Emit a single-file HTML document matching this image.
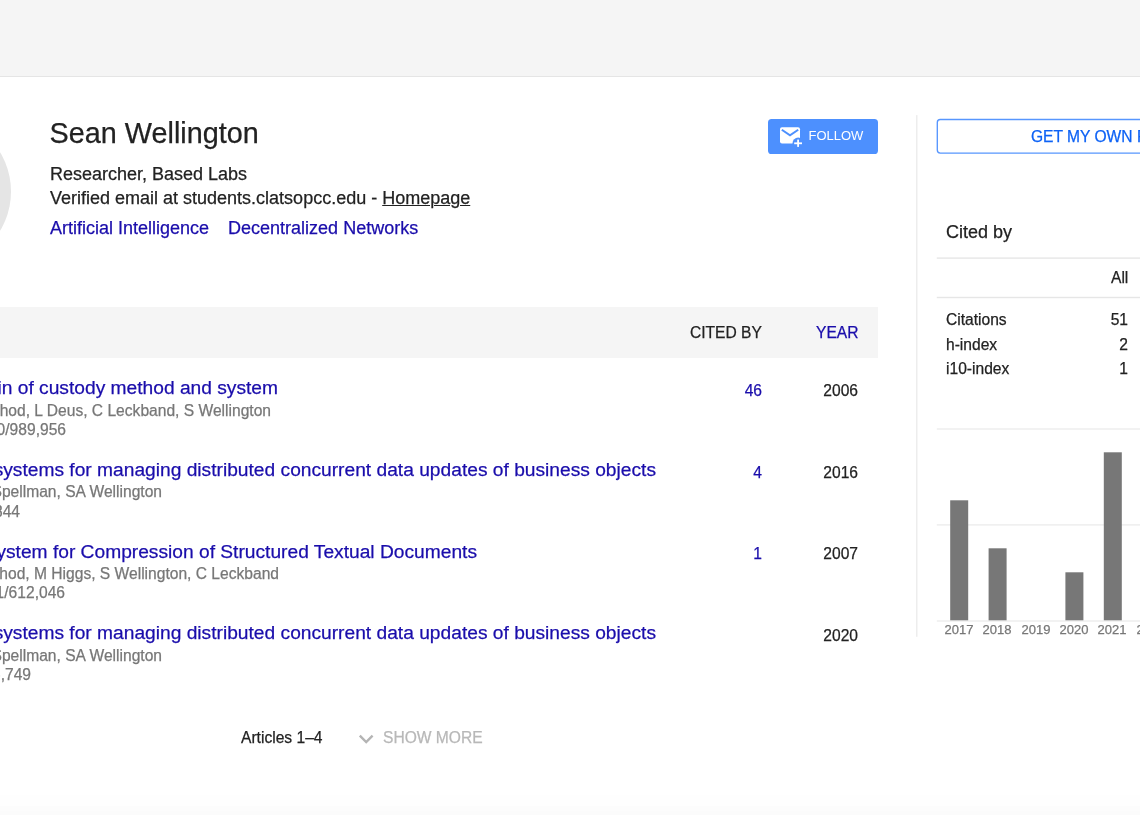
<!DOCTYPE html>
<html>
<head>
<meta charset="utf-8">
<title>Sean Wellington - Google Scholar</title>
<style>
html,body{margin:0;padding:0;}
body{width:1140px;height:815px;overflow:hidden;position:relative;background:#fff;font-family:"Liberation Sans",sans-serif;color:#222;}
.abs{position:absolute;white-space:nowrap;-webkit-text-stroke:0.25px currentColor;}
a{text-decoration:none;color:#1a0dab;}
#topbar{left:0;top:0;width:1140px;height:76px;background:#f5f5f5;border-bottom:1px solid #e5e5e5;}
#avatar{left:-142.3px;top:114.8px;width:153.6px;height:153.6px;border-radius:50%;background:#e5e5e5;}
#name{left:49.6px;top:115.5px;font-size:28.8px;line-height:34px;color:#222;}
.il{font-size:18px;line-height:24px;color:#222;}
#l1{left:50px;top:162px;}
#l2{left:50px;top:186px;}
#l2 u{color:#222;text-decoration-thickness:1.3px;}
#l3{left:50px;top:216px;}
#l3 a{margin-right:19px;}
#follow{left:768px;top:118.8px;width:109.8px;height:34.8px;background:#4d90fe;border-radius:3.6px;color:#fff;box-sizing:border-box;}
#follow span{position:absolute;left:40.5px;top:9.2px;font-size:13px;line-height:16px;-webkit-text-stroke:0;}
#vline{left:916px;top:115px;width:1.2px;height:522px;background:#ececec;}
#getown{left:936.6px;top:118.8px;width:300px;height:34.8px;border:1.2px solid transparent;border-radius:3.6px;box-sizing:border-box;color:#0d62f5;}
#getown span{position:absolute;left:93.3px;top:8.6px;font-size:15.6px;line-height:18px;}
#citedby{left:946px;top:221px;font-size:18px;line-height:22px;color:#222;}
.hl{height:1.2px;background:#e5e5e5;left:936.8px;width:220px;}
.st{font-size:15.6px;line-height:18px;color:#222;}
.stn{font-size:15.6px;line-height:18px;color:#222;text-align:right;width:60px;}
#thead{left:0;top:307.2px;width:878px;height:50.4px;background:#f5f5f5;}
.th{font-size:15.6px;line-height:18px;top:324.3px;}
.title{font-size:19.2px;line-height:23px;margin-top:0.4px;}
.gray{font-size:15.6px;line-height:18px;color:#777;margin-top:0.4px;}
.num{font-size:15.6px;line-height:18px;text-align:right;width:80px;}
.gl{background:#eee;}
.bar{background:#777;width:18px;margin-top:0.5px;}
.yl{font-size:13px;line-height:15px;color:#777;top:622px;width:40px;text-align:center;}
#foot{left:0;top:795px;width:1140px;height:20px;background:linear-gradient(#fefefe 0,#fefefe 11px,#fcfcfc 11px,#fcfcfc 16px,#fbfbfb 16px,#fbfbfb 20px);}
</style>
</head>
<body>
<div id="wrap" style="position:absolute;left:0;top:0;width:1140px;height:815px;will-change:transform;">
<div class="abs" id="topbar"></div>
<div class="abs" id="avatar"></div>
<div class="abs" id="name">Sean Wellington</div>
<div class="abs il" id="l1">Researcher, Based Labs</div>
<div class="abs il" id="l2">Verified email at students.clatsopcc.edu - <u>Homepage</u></div>
<div class="abs il" id="l3"><a>Artificial Intelligence</a><a>Decentralized Networks</a></div>

<div class="abs" id="follow">
<svg style="position:absolute;left:0;top:0" width="110" height="34.8" viewBox="768 118.8 110 34.8">
<rect x="780" y="127.1" width="20" height="16.3" rx="2" fill="#fff"/>
<path d="M781.8 129.6 L790 135.2 L798.2 129.6" fill="none" stroke="#4d90fe" stroke-width="2"/>
<circle cx="798.2" cy="143.1" r="5.7" fill="#4d90fe"/>
<rect x="794.2" y="142.2" width="7.8" height="1.8" fill="#fff"/>
<rect x="797.2" y="139.4" width="1.8" height="7.3" fill="#fff"/>
</svg>
<span>FOLLOW</span></div>

<svg class="abs" style="left:910px;top:110px" width="12" height="532" viewBox="910 110 12 532"><rect x="916.2" y="115.1" width="1.2" height="521.7" fill="#e9e9e9"/></svg>
<svg class="abs" style="left:930px;top:112px" width="210" height="50" viewBox="930 112 210 50"><rect x="937.3" y="119.5" width="300" height="33.6" rx="3" fill="none" stroke="#5796fe" stroke-width="1.35"/></svg>
<div class="abs" id="getown"><span id="getowntxt">GET MY OWN PROFILE</span></div>
<div class="abs" id="citedby">Cited by</div>
<svg class="abs" style="left:930px;top:250px" width="210" height="56" viewBox="930 250 210 56"><rect x="936.8" y="257.4" width="210" height="1.4" fill="#e6e6e6"/><rect x="936.8" y="296.8" width="210" height="1.4" fill="#e6e6e6"/></svg>
<div class="abs st" id="all" style="left:1111px;top:269px">All</div>
<div class="abs st" id="s1" style="left:946px;top:311.4px">Citations</div>
<div class="abs st" id="s2" style="left:946px;top:336.3px">h-index</div>
<div class="abs st" id="s3" style="left:946px;top:359.6px">i10-index</div>
<div class="abs stn" id="n1" style="left:1068px;top:311.4px">51</div>
<div class="abs stn" id="n2" style="left:1068px;top:336.3px">2</div>
<div class="abs stn" id="n3" style="left:1068px;top:359.6px">1</div>

<svg class="abs" style="left:930px;top:420px" width="210" height="210" viewBox="930 420 210 210"><rect x="936.8" y="428.4" width="210" height="1.2" fill="#eaeaea"/><rect x="936.8" y="524.3" width="210" height="1.2" fill="#eaeaea"/><rect x="936.8" y="620.4" width="210" height="1.2" fill="#eaeaea"/><rect x="950.2" y="500.3" width="18" height="120" fill="#777"/><rect x="988.6" y="548.3" width="18" height="72" fill="#777"/><rect x="1065.4" y="572.3" width="18" height="48" fill="#777"/><rect x="1103.8" y="452.3" width="18" height="168" fill="#777"/></svg>
<div class="abs yl" id="y1" style="left:939px">2017</div>
<div class="abs yl" id="y2" style="left:977px">2018</div>
<div class="abs yl" id="y3" style="left:1016px">2019</div>
<div class="abs yl" id="y4" style="left:1054px">2020</div>
<div class="abs yl" id="y5" style="left:1092px">2021</div>
<div class="abs yl" id="y6" style="left:1131px">2022</div>

<div class="abs" id="thead"></div>
<div class="abs th" id="thc" style="left:690px;color:#222">CITED BY</div>
<div class="abs th" id="thy" style="left:816px;color:#1a0dab">YEAR</div>

<div class="abs title" id="t1" style="top:376.0px;right:862px"><a>Electronic chain of custody method and system</a></div>
<div class="abs gray" id="a1" style="top:401.5px;right:869px">E Whod, L Deus, C Leckband, S Wellington</div>
<div class="abs gray" id="p1" style="top:420.7px;right:1074px">US Patent App. 10/989,956</div>
<div class="abs num" id="c1" style="left:682px;top:382.2px;color:#1a0dab">46</div>
<div class="abs num" id="r1" style="left:778px;top:382.2px">2006</div>
<div class="abs title" id="t2" style="top:457.6px;right:484px"><a>Methods and systems for managing distributed concurrent data updates of business objects</a></div>
<div class="abs gray" id="a2" style="top:483.1px;right:978px">K Reimer, M Spellman, SA Wellington</div>
<div class="abs gray" id="p2" style="top:502.3px;right:1120px">US Patent 10,437,844</div>
<div class="abs num" id="c2" style="left:682px;top:463.8px;color:#1a0dab">4</div>
<div class="abs num" id="r2" style="left:778px;top:463.8px">2016</div>
<div class="abs title" id="t3" style="top:539.2px;right:663px"><a>Method and System for Compression of Structured Textual Documents</a></div>
<div class="abs gray" id="a3" style="top:564.7px;right:861px">E Whod, M Higgs, S Wellington, C Leckband</div>
<div class="abs gray" id="p3" style="top:583.9px;right:1075px">US Patent App. 11/612,046</div>
<div class="abs num" id="c3" style="left:682px;top:545.4px;color:#1a0dab">1</div>
<div class="abs num" id="r3" style="left:778px;top:545.4px">2007</div>
<div class="abs title" id="t4" style="top:620.8px;right:484px"><a>Methods and systems for managing distributed concurrent data updates of business objects</a></div>
<div class="abs gray" id="a4" style="top:646.3px;right:978px">K Reimer, M Spellman, SA Wellington</div>
<div class="abs gray" id="p4" style="top:665.5px;right:1109px">US Patent 10,936,749</div>
<div class="abs num" id="r4" style="left:778px;top:627.0px">2020</div>

<div class="abs" id="foot"></div>
<div class="abs" id="art" style="left:241px;top:729.2px;font-size:15.6px;line-height:18px;color:#222">Articles 1–4</div>
<svg class="abs" style="left:355px;top:730px" width="24" height="18" viewBox="355 730 24 18"><path d="M359.8 735.6 L366.2 742 L372.6 735.6" fill="none" stroke="#b4b4b4" stroke-width="2.4"/></svg>
<div class="abs" id="more" style="left:383px;top:729.2px;font-size:15.6px;line-height:18px;color:#b8b8b8">SHOW MORE</div>
</div>
</body>
</html>
